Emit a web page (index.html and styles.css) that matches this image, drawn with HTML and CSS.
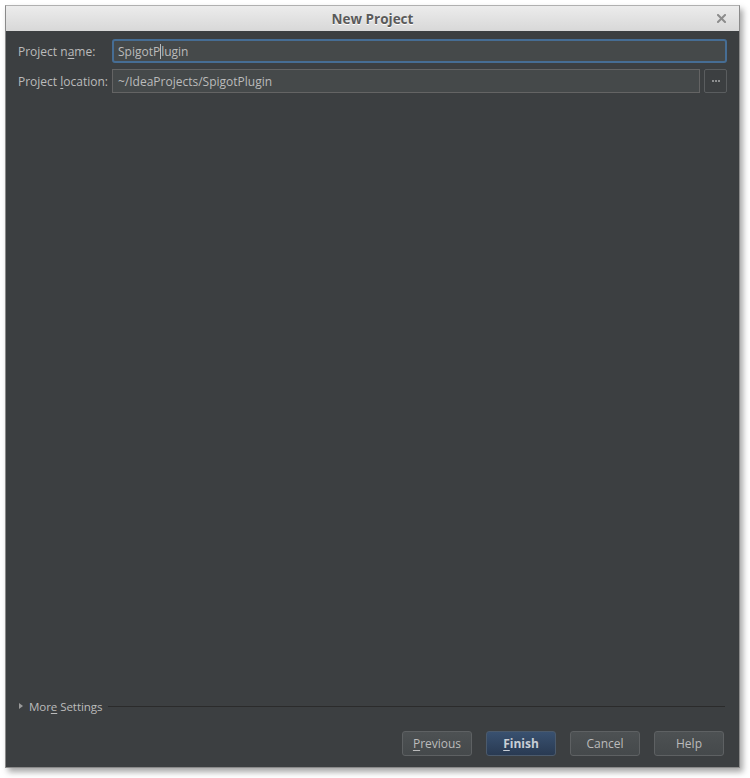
FILE: index.html
```html
<!DOCTYPE html>
<html>
<head>
<meta charset="utf-8">
<title>New Project</title>
<link rel="stylesheet" href="styles.css">
</head>
<body>
<div class="dialog">
  <div class="titlebar">
    <span class="title">New Project</span>
    <svg class="close" width="9" height="9" viewBox="0 0 9 9">
      <path d="M1 1 L8 8 M8 1 L1 8" stroke="#8c8c8c" stroke-width="2" stroke-linecap="square"/>
    </svg>
  </div>
  <div class="content">
    <div class="row">
      <label class="label">Project n<u>a</u>me:</label>
      <div class="field focused"><span>SpigotP</span><span class="caret"></span><span>lugin</span></div>
    </div>
    <div class="row">
      <label class="label">Project <u>l</u>ocation:</label>
      <div class="field">~/IdeaProjects/SpigotPlugin</div>
      <div class="browse">
        <svg width="8" height="2" viewBox="0 0 8 2">
          <rect x="0" y="0" width="2" height="2" fill="#8d8f90"/>
          <rect x="3" y="0" width="2" height="2" fill="#8d8f90"/>
          <rect x="6" y="0" width="2" height="2" fill="#8d8f90"/>
        </svg>
      </div>
    </div>
    <div class="spacer"></div>
    <div class="more">
      <span class="arrow"></span>
      <span class="more-text">Mor<u>e</u> Settings</span>
      <span class="rule"></span>
    </div>
    <div class="buttons">
      <div class="btn"><u>P</u>revious</div>
      <div class="btn primary"><u>F</u>inish</div>
      <div class="btn">Cancel</div>
      <div class="btn">Help</div>
    </div>
  </div>
</div>
</body>
</html>
```

FILE: styles.css
```css
html, body {
  margin: 0;
  padding: 0;
  background: #ffffff;
  width: 750px;
  height: 778px;
  overflow: hidden;
}

body {
  font-family: "Open Sans", "Noto Sans", sans-serif;
  font-size: 12px;
  color: #bbbbbb;
  padding: 5px 0 0 5px;
  box-sizing: border-box;
}

.dialog {
  width: 735px;
  height: 763px;
  border: 1px solid #8a8a8a;
  border-top-color: #b0b0b0;
  box-sizing: border-box;
  display: flex;
  flex-direction: column;
  box-shadow: 3px 4px 6px rgba(0, 0, 0, 0.35);
  background: #3c3f41;
}

.titlebar {
  height: 25px;
  flex: none;
  background: linear-gradient(#ececec, #d8d8d8);
  display: flex;
  align-items: center;
  justify-content: center;
  position: relative;
}

.title {
  font-weight: bold;
  font-size: 13.5px;
  color: #5a5a5a;
  text-shadow: 0 1px 0 #ffffff;
}

.close {
  position: absolute;
  right: 13px;
  top: 8px;
}

.content {
  flex: 1;
  display: flex;
  flex-direction: column;
  padding: 8px 12px 11px 12px;
}

.row {
  display: flex;
  align-items: center;
  height: 24px;
  margin-bottom: 6px;
}

.label {
  width: 94px;
  flex: none;
  white-space: nowrap;
}

u {
  text-decoration: underline;
  text-underline-offset: 2px;
}

.field {
  flex: 1;
  height: 24px;
  box-sizing: border-box;
  background: #45494a;
  border: 1px solid #646464;
  display: flex;
  align-items: center;
  padding: 0 5px;
  color: #bbbbbb;
}

.field.focused {
  border: 2px solid #466d94;
  border-radius: 3px;
  padding: 0 4px;
}

.caret {
  width: 1px;
  height: 15px;
  background: #bbbbbb;
}

.browse {
  width: 23px;
  height: 24px;
  flex: none;
  margin-left: 4px;
  box-sizing: border-box;
  border: 1px solid #5a5d5f;
  border-radius: 2px;
  display: flex;
  align-items: center;
  justify-content: center;
}

.spacer {
  flex: 1;
}

.more {
  display: flex;
  align-items: center;
  height: 14px;
  margin-bottom: 18px;
}

.arrow {
  width: 0;
  height: 0;
  border-left: 4px solid #9a9a9a;
  border-top: 3.5px solid transparent;
  border-bottom: 3.5px solid transparent;
  margin-left: 1px;
  margin-right: 6px;
}

.more-text {
  white-space: nowrap;
  margin-right: 6px;
  font-size: 11.6px;
  letter-spacing: -0.1px;
}

.rule {
  flex: 1;
  height: 1px;
  background: #2b2b2b;
  margin-right: 2px;
}

.buttons {
  display: flex;
  justify-content: flex-end;
  gap: 14px;
  padding-right: 3px;
}

.btn {
  width: 70px;
  height: 25px;
  box-sizing: border-box;
  border: 1px solid #5e6163;
  border-radius: 3px;
  background: linear-gradient(#4d5153, #45494b);
  display: flex;
  align-items: center;
  justify-content: center;
  color: #bbbbbb;
}

.btn.primary {
  background: linear-gradient(#395170, #293a52);
  border-color: #4b5a6c;
  font-weight: bold;
  color: #c8ced6;
}
```
